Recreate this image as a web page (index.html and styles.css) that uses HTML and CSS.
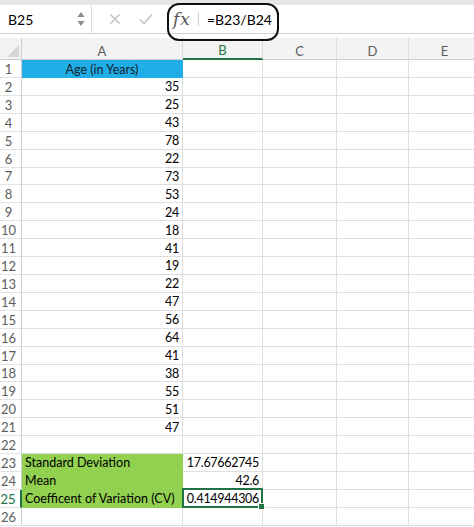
FILE: index.html
```html
<!DOCTYPE html>
<html>
<head>
<meta charset="utf-8">
<link rel="stylesheet" href="styles.css">
</head>
<body>
<div class="fbar">
  <div class="namebox">
    <span class="ref">B25</span>
    <svg class="spin" width="8" height="16" viewBox="0 0 8 16"><path d="M4 1 L7.5 6 L0.5 6 Z" fill="#8a8a8a"/><path d="M0.5 10 L7.5 10 L4 15 Z" fill="#8a8a8a"/></svg>
  </div>
  <div class="actions">
    <svg class="cancel" width="12" height="12" viewBox="0 0 12 12"><path d="M1.5 1.5 L10.5 10.5 M10.5 1.5 L1.5 10.5" stroke="#c4c4c4" stroke-width="1.6" fill="none"/></svg>
    <svg class="enter" width="14" height="12" viewBox="0 0 14 12"><path d="M1 6.5 L5 10.5 L13 1.5" stroke="#c4c4c4" stroke-width="1.6" fill="none"/></svg>
  </div>
  <div class="formula">
    <span class="fx">fx</span>
    <span class="sep"></span>
    <span class="ftext">=B23/B24</span>
  </div>
  <div class="callout"></div>
</div>
<div class="gap"></div>
<div class="sheet">
  <div class="row head">
    <div class="corner"><svg width="12" height="12" viewBox="0 0 12 12"><path d="M12 0 L12 12 L0 12 Z" fill="#d6d6d6"/></svg></div>
    <div class="ch">A</div><div class="ch active">B</div><div class="ch">C</div><div class="ch">D</div><div class="ch">E</div>
  </div>
  <div class="row"><div class="rh">1</div><div class="c a blue">Age (in Years)</div><div class="c"></div><div class="c"></div><div class="c"></div><div class="c"></div></div>
  <div class="row"><div class="rh">2</div><div class="c a num">35</div><div class="c"></div><div class="c"></div><div class="c"></div><div class="c"></div></div>
  <div class="row"><div class="rh">3</div><div class="c a num">25</div><div class="c"></div><div class="c"></div><div class="c"></div><div class="c"></div></div>
  <div class="row"><div class="rh">4</div><div class="c a num">43</div><div class="c"></div><div class="c"></div><div class="c"></div><div class="c"></div></div>
  <div class="row"><div class="rh">5</div><div class="c a num">78</div><div class="c"></div><div class="c"></div><div class="c"></div><div class="c"></div></div>
  <div class="row"><div class="rh">6</div><div class="c a num">22</div><div class="c"></div><div class="c"></div><div class="c"></div><div class="c"></div></div>
  <div class="row"><div class="rh">7</div><div class="c a num">73</div><div class="c"></div><div class="c"></div><div class="c"></div><div class="c"></div></div>
  <div class="row"><div class="rh">8</div><div class="c a num">53</div><div class="c"></div><div class="c"></div><div class="c"></div><div class="c"></div></div>
  <div class="row"><div class="rh">9</div><div class="c a num">24</div><div class="c"></div><div class="c"></div><div class="c"></div><div class="c"></div></div>
  <div class="row"><div class="rh">10</div><div class="c a num">18</div><div class="c"></div><div class="c"></div><div class="c"></div><div class="c"></div></div>
  <div class="row"><div class="rh">11</div><div class="c a num">41</div><div class="c"></div><div class="c"></div><div class="c"></div><div class="c"></div></div>
  <div class="row"><div class="rh">12</div><div class="c a num">19</div><div class="c"></div><div class="c"></div><div class="c"></div><div class="c"></div></div>
  <div class="row"><div class="rh">13</div><div class="c a num">22</div><div class="c"></div><div class="c"></div><div class="c"></div><div class="c"></div></div>
  <div class="row"><div class="rh">14</div><div class="c a num">47</div><div class="c"></div><div class="c"></div><div class="c"></div><div class="c"></div></div>
  <div class="row"><div class="rh">15</div><div class="c a num">56</div><div class="c"></div><div class="c"></div><div class="c"></div><div class="c"></div></div>
  <div class="row"><div class="rh">16</div><div class="c a num">64</div><div class="c"></div><div class="c"></div><div class="c"></div><div class="c"></div></div>
  <div class="row"><div class="rh">17</div><div class="c a num">41</div><div class="c"></div><div class="c"></div><div class="c"></div><div class="c"></div></div>
  <div class="row"><div class="rh">18</div><div class="c a num">38</div><div class="c"></div><div class="c"></div><div class="c"></div><div class="c"></div></div>
  <div class="row"><div class="rh">19</div><div class="c a num">55</div><div class="c"></div><div class="c"></div><div class="c"></div><div class="c"></div></div>
  <div class="row"><div class="rh">20</div><div class="c a num">51</div><div class="c"></div><div class="c"></div><div class="c"></div><div class="c"></div></div>
  <div class="row"><div class="rh">21</div><div class="c a num">47</div><div class="c"></div><div class="c"></div><div class="c"></div><div class="c"></div></div>
  <div class="row"><div class="rh">22</div><div class="c a"></div><div class="c"></div><div class="c"></div><div class="c"></div><div class="c"></div></div>
  <div class="row"><div class="rh">23</div><div class="c a green">Standard Deviation</div><div class="c num">17.67662745</div><div class="c"></div><div class="c"></div><div class="c"></div></div>
  <div class="row"><div class="rh">24</div><div class="c a green">Mean</div><div class="c num">42.6</div><div class="c"></div><div class="c"></div><div class="c"></div></div>
  <div class="row"><div class="rh active">25</div><div class="c a green">Coefficent of Variation (CV)</div><div class="c num sel">0.414944306</div><div class="c"></div><div class="c"></div><div class="c"></div></div>
  <div class="row"><div class="rh">26</div><div class="c a"></div><div class="c"></div><div class="c"></div><div class="c"></div><div class="c"></div></div>
</div>
</body>
</html>
```
FILE: styles.css
```css
* { box-sizing: border-box; }
html, body { margin: 0; padding: 0; }
body {
  width: 474px;
  height: 527px;
  overflow: hidden;
  background: #fff;
  font-family: Lato, "Liberation Sans", sans-serif;
  color: #000;
  position: relative;
}

/* formula bar */
.fbar {
  position: relative;
  display: flex;
  height: 34px;
  border-top: 5px solid #e6e6e6;
  border-bottom: 1px solid #d2d2d2;
}
.namebox {
  width: 92px;
  display: flex;
  align-items: center;
  padding-left: 8px;
  padding-right: 6px;
  border-right: 1px solid #dadada;
  font-size: 14px;
}
.namebox .ref { flex: 1; }
.actions {
  width: 76px;
  display: flex;
  align-items: center;
  padding-left: 17px;
  gap: 18px;
}
.formula {
  flex: 1;
  display: flex;
  align-items: center;
  padding-left: 5px;
}
.fx {
  font-family: "DejaVu Serif", "Liberation Serif", serif;
  font-style: italic;
  font-size: 17px;
  color: #555;
  letter-spacing: 1px;
  line-height: 1;
}
.sep {
  width: 1px;
  height: 14px;
  background: #cfcfcf;
  margin: 0 8px 0 7px;
}
.ftext { font-size: 14px; }
.callout {
  position: absolute;
  left: 167px;
  top: -2px;
  width: 112px;
  height: 38px;
  border: 2.5px solid #111;
  border-radius: 12px;
}
.gap { height: 4px; }

/* sheet */
.row {
  display: grid;
  grid-template-columns: 22px 161px 80px 74px 72px 72px;
  height: 17.92px;
  font-size: 12.5px;
}
.row.head { height: 22px; }
.corner {
  background: #f3f3f3;
  border-right: 1px solid #cfcfcf;
  border-bottom: 1px solid #cfcfcf;
  display: flex;
  align-items: flex-end;
  justify-content: flex-end;
  padding: 0 2px 2px 0;
}
.ch {
  background: #f3f3f3;
  border-right: 1px solid #dcdcdc;
  border-bottom: 1px solid #cfcfcf;
  display: flex;
  align-items: center;
  justify-content: center;
  padding-top: 4px;
  color: #5c5c5c;
  font-size: 13px;
}
.ch.active {
  color: #217346;
  border-bottom: 2px solid #217346;
}
.rh {
  border-right: 1px solid #cfcfcf;
  border-bottom: 1px solid #e2e2e2;
  display: flex;
  align-items: center;
  justify-content: center;
  padding: 1px 4px 0 0;
  color: #5c5c5c;
  font-size: 13px;
}
.rh.active {
  color: #217346;
  border-right: 2px solid #217346;
}
.c {
  border-right: 1px solid #dedede;
  border-bottom: 1px solid #dedede;
  display: flex;
  align-items: center;
  padding: 1px 3px 0 3px;
  white-space: nowrap;
}
.num {
  justify-content: flex-end;
  letter-spacing: -0.3px;
}
.blue {
  background: #20aee8;
  border-color: #20aee8;
  justify-content: center;
  color: #14212b;
}
.green {
  background: #92d050;
  border-color: #92d050;
}
.sel { position: relative; }
.sel::after {
  content: "";
  position: absolute;
  left: -1px;
  top: -2px;
  right: -1px;
  bottom: -1px;
  border: 2px solid #217346;
}
.sel::before {
  content: "";
  position: absolute;
  right: -3px;
  bottom: -3px;
  width: 5px;
  height: 5px;
  background: #217346;
  border: 1px solid #fff;
  z-index: 2;
}
```
